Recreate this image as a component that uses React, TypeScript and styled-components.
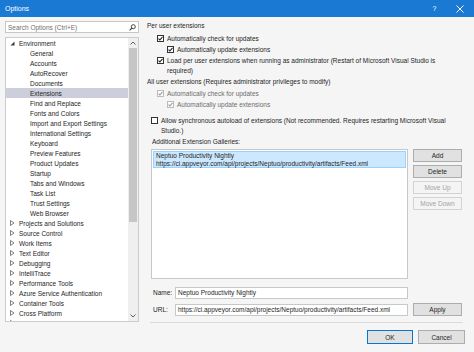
import styled, { createGlobalStyle } from "styled-components";

const GlobalStyle = createGlobalStyle`
  html, body {
    margin: 0;
    padding: 0;
  }
  body {
    font-family: "Liberation Sans", Arial, sans-serif;
    font-size: 6.5px;
    color: #1e1e1e;
    background: #f5f5f5;
  }
`;

const Window = styled.div`
  width: 474px;
  height: 352px;
  display: flex;
  flex-direction: column;
  background: #f5f5f5;
  overflow: hidden;
`;

const TitleBar = styled.div`
  height: 17px;
  flex: none;
  display: flex;
  align-items: center;
  padding: 0 2px 0 5px;
  background: #1979d3;
  color: #ffffff;
`;

const Title = styled.span`
  flex: 1;
  font-size: 7px;
`;

const TitleButton = styled.div`
  width: 25px;
  height: 17px;
  display: flex;
  align-items: center;
  justify-content: center;
  font-size: 7px;
`;

const Body = styled.div`
  flex: 1;
  display: flex;
  min-height: 0;
`;

const LeftColumn = styled.div`
  width: 134px;
  flex: none;
  margin-left: 5px;
  padding-top: 4px;
  display: flex;
  flex-direction: column;
  gap: 4px;
`;

const SearchBox = styled.div`
  height: 12px;
  box-sizing: border-box;
  border: 1px solid #c6c6c6;
  background: #ffffff;
  display: flex;
  align-items: center;
  padding: 0 2px 0 2px;
  color: #707070;

  span {
    flex: 1;
  }
`;

const Tree = styled.div`
  height: 285px;
  box-sizing: border-box;
  border: 1px solid #cccccc;
  background: #ffffff;
  display: flex;
  overflow: hidden;
`;

const TreeList = styled.div`
  flex: 1;
  overflow: hidden;
`;

const TreeRow = styled.div<{ $child?: boolean; $selected?: boolean }>`
  height: 10px;
  display: flex;
  align-items: center;
  padding-left: ${(p) => (p.$child ? 24 : 4)}px;
  background: ${(p) => (p.$selected ? "#cccedb" : "transparent")};
  white-space: nowrap;
`;

const Expander = styled.span`
  width: 9px;
  flex: none;
  display: flex;
  align-items: center;
`;

const ScrollBar = styled.div`
  width: 10px;
  flex: none;
  background: #efefef;
  display: flex;
  flex-direction: column;
  align-items: center;
`;

const ScrollArrow = styled.div`
  height: 10px;
  width: 10px;
  display: flex;
  align-items: center;
  justify-content: center;
`;

const ScrollThumb = styled.div`
  width: 8px;
  height: 174px;
  background: #c6c6c6;
`;

const ScrollSpace = styled.div`
  flex: 1;
`;

const RightColumn = styled.div`
  flex: 1;
  margin: 0 8px;
  padding-top: 4px;
  display: flex;
  flex-direction: column;
  min-width: 0;
`;

const SectionHeader = styled.div<{ $gap?: number }>`
  line-height: 10px;
  margin-top: ${(p) => p.$gap ?? 0}px;
  white-space: nowrap;
`;

const CheckRow = styled.div<{ $indent: number; $gap?: number; $disabled?: boolean }>`
  display: flex;
  gap: 3px;
  padding: 0.5px 0 0.5px ${(p) => p.$indent}px;
  margin-top: ${(p) => p.$gap ?? 0}px;
  line-height: 10px;
  white-space: nowrap;
  color: ${(p) => (p.$disabled ? "#6d6d6d" : "#1e1e1e")};
`;

const Box = styled.span<{ $disabled?: boolean }>`
  width: 7px;
  height: 7px;
  flex: none;
  box-sizing: border-box;
  margin-top: 1.5px;
  border: 1px solid ${(p) => (p.$disabled ? "#bcbcbc" : "#333333")};
  background: #ffffff;
  display: flex;
  align-items: center;
  justify-content: center;
`;

const GalleryRow = styled.div`
  display: flex;
  gap: 5px;
  padding: 0 4px;
  margin-top: 2px;
`;

const ListBox = styled.div`
  flex: 1;
  height: 130px;
  box-sizing: border-box;
  border: 1px solid #c8c8c8;
  background: #ffffff;
  padding: 1px;
`;

const ListItem = styled.div`
  border: 1px solid #99d1ff;
  background: #cce8ff;
  padding: 0 2px;
  line-height: 7.5px;
  white-space: nowrap;
`;

const SideButtons = styled.div`
  width: 49px;
  display: flex;
  flex-direction: column;
  gap: 3px;
`;

const Button = styled.button<{ $primary?: boolean; $width?: number; $height?: number }>`
  width: ${(p) => (p.$width ? `${p.$width}px` : "100%")};
  height: ${(p) => p.$height ?? 13}px;
  box-sizing: border-box;
  padding: 0;
  font-family: inherit;
  font-size: inherit;
  color: #1e1e1e;
  background: #e1e1e1;
  border: 1px solid ${(p) => (p.$primary ? "#0078d7" : "#adadad")};
  border-radius: 0;

  &:disabled {
    background: #f4f4f4;
    border-color: #d3d3d3;
    color: #a3a3a3;
  }
`;

const FormGrid = styled.div`
  display: grid;
  grid-template-columns: 19px 1fr 49px;
  grid-auto-rows: 13px;
  column-gap: 5px;
  row-gap: 4px;
  padding: 0 4px;
  margin-top: 7px;
  align-items: center;
`;

const FieldLabel = styled.span`
  padding-left: 2px;
  white-space: nowrap;
`;

const TextField = styled.div`
  height: 12px;
  box-sizing: border-box;
  border: 1px solid #c8c8c8;
  background: #ffffff;
  padding: 0 2px;
  line-height: 10px;
  white-space: nowrap;
  overflow: hidden;
`;

const Separator = styled.div`
  height: 1px;
  margin: 6px 3px 0;
  background: #dadada;
`;

const Footer = styled.div`
  display: flex;
  justify-content: flex-end;
  gap: 5px;
  margin-top: 7px;
  padding-right: 1px;
`;

function Check({ checked, disabled }: { checked?: boolean; disabled?: boolean }) {
  return (
    <Box $disabled={disabled}>
      {checked && (
        <svg width="5" height="5" viewBox="0 0 5 5">
          <path
            d="M0.5 2.6 L1.9 4 L4.5 0.9"
            fill="none"
            stroke={disabled ? "#9a9a9a" : "#222222"}
            strokeWidth="1.1"
          />
        </svg>
      )}
    </Box>
  );
}

type Node = { label: string; child?: boolean; expanded?: boolean; selected?: boolean };

const tree: Node[] = [
  { label: "Environment", expanded: true },
  { label: "General", child: true },
  { label: "Accounts", child: true },
  { label: "AutoRecover", child: true },
  { label: "Documents", child: true },
  { label: "Extensions", child: true, selected: true },
  { label: "Find and Replace", child: true },
  { label: "Fonts and Colors", child: true },
  { label: "Import and Export Settings", child: true },
  { label: "International Settings", child: true },
  { label: "Keyboard", child: true },
  { label: "Preview Features", child: true },
  { label: "Product Updates", child: true },
  { label: "Startup", child: true },
  { label: "Tabs and Windows", child: true },
  { label: "Task List", child: true },
  { label: "Trust Settings", child: true },
  { label: "Web Browser", child: true },
  { label: "Projects and Solutions" },
  { label: "Source Control" },
  { label: "Work Items" },
  { label: "Text Editor" },
  { label: "Debugging" },
  { label: "IntelliTrace" },
  { label: "Performance Tools" },
  { label: "Azure Service Authentication" },
  { label: "Container Tools" },
  { label: "Cross Platform" },
  { label: "Database Tools" },
];

const FEED = "https://ci.appveyor.com/api/projects/Neptuo/productivity/artifacts/Feed.xml";

export default function App() {
  return (
    <>
      <GlobalStyle />
      <Window>
        <TitleBar>
          <Title>Options</Title>
          <TitleButton>?</TitleButton>
          <TitleButton>
            <svg width="8" height="8" viewBox="0 0 8 8">
              <path d="M0.5 0.5 L7.5 7.5 M7.5 0.5 L0.5 7.5" stroke="#ffffff" strokeWidth="1" />
            </svg>
          </TitleButton>
        </TitleBar>
        <Body>
          <LeftColumn>
            <SearchBox>
              <span>Search Options (Ctrl+E)</span>
              <svg width="7" height="7" viewBox="0 0 7 7">
                <circle cx="4.3" cy="2.7" r="2" fill="none" stroke="#444444" strokeWidth="1" />
                <path d="M2.9 4.1 L0.6 6.4" stroke="#444444" strokeWidth="1.2" />
              </svg>
            </SearchBox>
            <Tree>
              <TreeList>
                {tree.map((n) => (
                  <TreeRow key={n.label} $child={n.child} $selected={n.selected}>
                    {!n.child && (
                      <Expander>
                        {n.expanded ? (
                          <svg width="5" height="5" viewBox="0 0 5 5">
                            <polygon points="4.5,0.5 4.5,4.5 0.5,4.5" fill="#3c3c3c" />
                          </svg>
                        ) : (
                          <svg width="5" height="6" viewBox="0 0 5 6">
                            <polygon points="0.5,0.5 4,3 0.5,5.5" fill="none" stroke="#707070" strokeWidth="0.9" />
                          </svg>
                        )}
                      </Expander>
                    )}
                    {n.label}
                  </TreeRow>
                ))}
              </TreeList>
              <ScrollBar>
                <ScrollArrow>
                  <svg width="6" height="4" viewBox="0 0 6 4">
                    <polyline points="0.5,3.5 3,1 5.5,3.5" fill="none" stroke="#606060" strokeWidth="1" />
                  </svg>
                </ScrollArrow>
                <ScrollThumb />
                <ScrollSpace />
                <ScrollArrow>
                  <svg width="6" height="4" viewBox="0 0 6 4">
                    <polyline points="0.5,0.5 3,3 5.5,0.5" fill="none" stroke="#606060" strokeWidth="1" />
                  </svg>
                </ScrollArrow>
              </ScrollBar>
            </Tree>
          </LeftColumn>

          <RightColumn>
            <SectionHeader>Per user extensions</SectionHeader>
            <CheckRow $indent={10} $gap={2}>
              <Check checked />
              <span>Automatically check for updates</span>
            </CheckRow>
            <CheckRow $indent={20}>
              <Check checked />
              <span>Automatically update extensions</span>
            </CheckRow>
            <CheckRow $indent={10}>
              <Check checked />
              <span>
                Load per user extensions when running as administrator (Restart of Microsoft Visual Studio is
                <br />
                required)
              </span>
            </CheckRow>
            <SectionHeader $gap={1}>All user extensions (Requires administrator privileges to modify)</SectionHeader>
            <CheckRow $indent={10} $gap={1} $disabled>
              <Check checked disabled />
              <span>Automatically check for updates</span>
            </CheckRow>
            <CheckRow $indent={20} $disabled>
              <Check checked disabled />
              <span>Automatically update extensions</span>
            </CheckRow>
            <CheckRow $indent={4} $gap={5}>
              <Check />
              <span>
                Allow synchronous autoload of extensions (Not recommended. Requires restarting Microsoft Visual
                <br />
                Studio.)
              </span>
            </CheckRow>
            <SectionHeader $gap={1} style={{ paddingLeft: 5 }}>
              Additional Extension Galleries:
            </SectionHeader>

            <GalleryRow>
              <ListBox>
                <ListItem>
                  Neptuo Productivity Nightly
                  <br />
                  {FEED}
                </ListItem>
              </ListBox>
              <SideButtons>
                <Button>Add</Button>
                <Button>Delete</Button>
                <Button disabled>Move Up</Button>
                <Button disabled>Move Down</Button>
              </SideButtons>
            </GalleryRow>

            <FormGrid>
              <FieldLabel>Name:</FieldLabel>
              <TextField>Neptuo Productivity Nightly</TextField>
              <span />
              <FieldLabel>URL:</FieldLabel>
              <TextField>{FEED}</TextField>
              <Button>Apply</Button>
            </FormGrid>

            <Separator />

            <Footer>
              <Button $primary $width={46} $height={14}>
                OK
              </Button>
              <Button $width={47} $height={14}>
                Cancel
              </Button>
            </Footer>
          </RightColumn>
        </Body>
      </Window>
    </>
  );
}
